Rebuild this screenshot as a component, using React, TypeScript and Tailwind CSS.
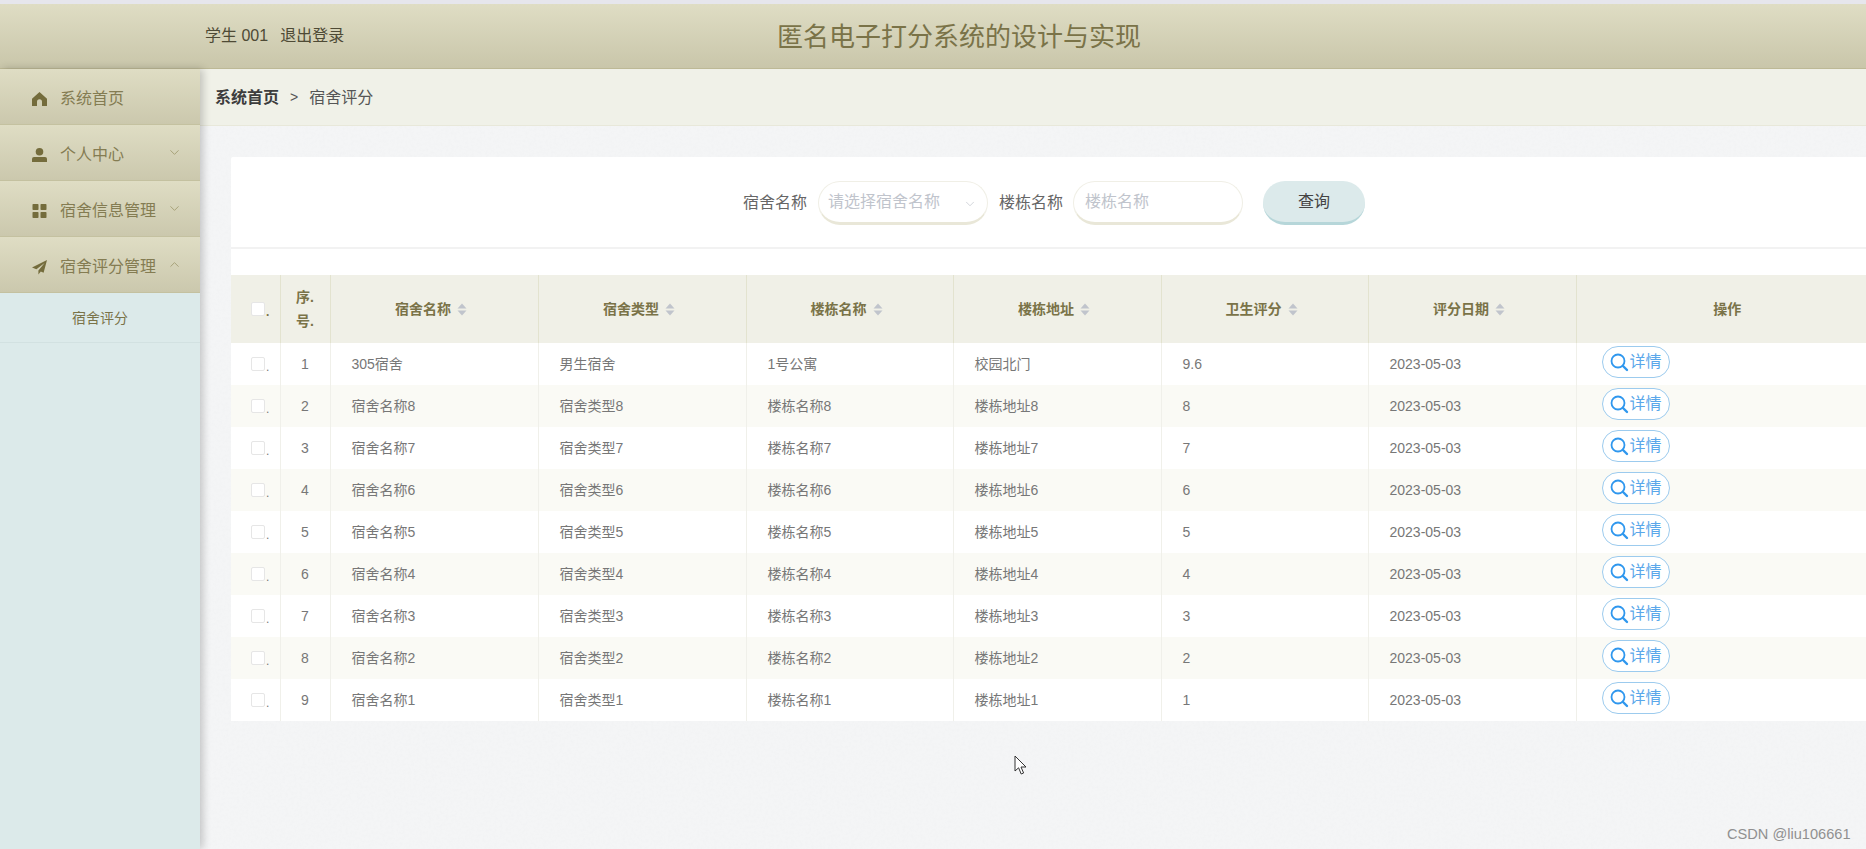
import { ChevronDown, ChevronUp } from 'lucide-react';
import type { ReactNode } from 'react';

const font = "font-['Liberation_Sans','Noto_Sans_CJK_SC',sans-serif]";

const rows = [
  { id: 1, name: '305宿舍', type: '男生宿舍', building: '1号公寓', address: '校园北门', score: '9.6' },
  { id: 2, name: '宿舍名称8', type: '宿舍类型8', building: '楼栋名称8', address: '楼栋地址8', score: '8' },
  { id: 3, name: '宿舍名称7', type: '宿舍类型7', building: '楼栋名称7', address: '楼栋地址7', score: '7' },
  { id: 4, name: '宿舍名称6', type: '宿舍类型6', building: '楼栋名称6', address: '楼栋地址6', score: '6' },
  { id: 5, name: '宿舍名称5', type: '宿舍类型5', building: '楼栋名称5', address: '楼栋地址5', score: '5' },
  { id: 6, name: '宿舍名称4', type: '宿舍类型4', building: '楼栋名称4', address: '楼栋地址4', score: '4' },
  { id: 7, name: '宿舍名称3', type: '宿舍类型3', building: '楼栋名称3', address: '楼栋地址3', score: '3' },
  { id: 8, name: '宿舍名称2', type: '宿舍类型2', building: '楼栋名称2', address: '楼栋地址2', score: '2' },
  { id: 9, name: '宿舍名称1', type: '宿舍类型1', building: '楼栋名称1', address: '楼栋地址1', score: '1' },
];

// menu glyphs drawn to match the template's own icon font
const menu = [
  {
    label: '系统首页',
    icon: <path d="M7.5 0 15 6.8V14H10V9.8a2.5 2.5 0 0 0-5 0V14H0V6.8Z" />,
  },
  {
    label: '个人中心',
    arrow: 'down',
    icon: (
      <>
        <circle cx="7.5" cy="3.8" r="3.8" />
        <path d="M2 9h11a2 2 0 0 1 2 2v3H0v-3a2 2 0 0 1 2-2Z" />
      </>
    ),
  },
  {
    label: '宿舍信息管理',
    arrow: 'down',
    icon: (
      <>
        <rect x="0.5" y="0" width="6" height="6" rx="0.8" />
        <rect x="8.5" y="0" width="6" height="6" rx="0.8" />
        <rect x="0.5" y="8" width="6" height="6" rx="0.8" />
        <rect x="8.5" y="8" width="6" height="6" rx="0.8" />
      </>
    ),
  },
  {
    label: '宿舍评分管理',
    arrow: 'up',
    icon: <path d="M15 0 0 7.6l4.4 1.6L12.6 3 6.4 10.4V14.4L8.8 11.6 11.6 12.8Z" />,
  },
];

function SortIcon() {
  return (
    <svg width="10" height="13" viewBox="0 0 10 13" className="shrink-0" fill="#c0c4cc">
      <path d="M5 0.5 9.5 5.5H0.5Z" />
      <path d="M5 12.5 0.5 7.5H9.5Z" />
    </svg>
  );
}

function Check() {
  return (
    <div className="flex items-center pl-[20px]">
      <span className="block h-[14px] w-[14px] rounded-[2px] border border-[#e6e6e6] bg-white" />
      <span className="ml-[1px] mt-[6px] text-[12px] leading-none">.</span>
    </div>
  );
}

function Th({ children, sort = true }: { children: ReactNode; sort?: boolean }) {
  return (
    <th className="border-r border-[#e3e3cf] p-0 align-middle">
      <div className="flex items-center justify-center gap-[6px] pr-[6px] text-[14px] font-bold text-[#7a7348]">
        {children}
        {sort && <SortIcon />}
      </div>
    </th>
  );
}

function Td({ children }: { children: ReactNode }) {
  return <td className="border-r border-[#f0f0ea] pl-[21px] align-middle">{children}</td>;
}

export default function App() {
  return (
    <div className={`relative h-[849px] w-[1866px] overflow-hidden bg-[#f4f5f6] ${font}`}>
      <div className="h-[4px] bg-[#e6e6ec]" />
      <header className="flex h-[65px] items-center border-b border-[#bdb996] bg-gradient-to-b from-[#dfddc4] to-[#c9c6aa]">
        <div className="w-[205px] shrink-0" />
        <div className="w-[300px] text-[16px] text-[#4e4a35]">
          学生 001<span className="ml-[12px]">退出登录</span>
        </div>
        <h1 className="ml-[272px] mt-[2px] text-[26px] font-normal text-[#7a7348]">匿名电子打分系统的设计与实现</h1>
      </header>

      <div className="flex h-[780px]">
        <aside className="relative z-10 w-[200px] shrink-0 bg-[#dceaea] shadow-[3px_0_8px_rgba(0,0,0,0.2)]">
          {menu.map(item => (
            <div
              key={item.label}
              className="flex h-[56px] items-center border-b border-[#c4c1a0] bg-gradient-to-b from-[#dfddc4] to-[#cbc8ad] pl-[32px] pr-[18px] pt-[5px] text-[16px] text-[#847c52]"
            >
              <svg width="15" height="15" viewBox="0 0 15 15" fill="#746c3c" className="shrink-0">{item.icon}</svg>
              <span className="ml-[13px] w-[96px] shrink-0">{item.label}</span>
              {item.arrow === 'down' && <ChevronDown size={15} strokeWidth={1.4} className="-mt-[6px] ml-auto text-[#a09a70]" />}
              {item.arrow === 'up' && <ChevronUp size={15} strokeWidth={1.4} className="-mt-[6px] ml-auto text-[#a09a70]" />}
            </div>
          ))}
          <div className="flex h-[50px] items-center justify-center border-b border-[#d2e1e1] pt-[1px] text-[14px] text-[#7a7348]">宿舍评分</div>
        </aside>

        <main className="relative min-w-0 flex-1">
          {/* faint paper grain behind the card */}
          <svg className="absolute inset-0 h-full w-full" aria-hidden="true">
            <filter id="paper">
              <feTurbulence type="fractalNoise" baseFrequency="0.35" numOctaves="3" seed="7" />
              <feColorMatrix values="0 0 0 0 0.6  0 0 0 0 0.62  0 0 0 0 0.65  0 0 0 0.5 -0.2" />
            </filter>
            <rect width="100%" height="100%" filter="url(#paper)" opacity="0.22" />
          </svg>

          <div className="relative flex h-[57px] items-center border-b border-[#e8e8da] bg-[#f0f1e8] pl-[15px] pt-[1px] text-[16px]">
            <span className="font-bold text-[#3d3d3d]">系统首页</span>
            <span className="mx-[11px] text-[14px] text-[#555]">&gt;</span>
            <span className="text-[#555]">宿舍评分</span>
          </div>

          <div className="relative ml-[31px] mt-[31px] w-[1647px] rounded-[2px] bg-white">
            <div className="flex h-[92px] items-center justify-center border-b-2 border-[#f2f2f2] pr-[1px] pt-[2px]">
              <label className="text-[16px] text-[#666]">宿舍名称</label>
              <div className="ml-[11px] flex h-[44px] w-[170px] items-center justify-between rounded-[22px] border border-[#f0efe6] border-b-[3px] border-b-[#e9e7d8] bg-white pl-[9px] pr-[10px] text-[16px] text-[#c0c4cc]">
                请选择宿舍名称
                <ChevronDown size={14} strokeWidth={1.2} className="mt-[3px]" />
              </div>
              <label className="ml-[11px] text-[16px] text-[#666]">楼栋名称</label>
              <div className="ml-[10px] flex h-[44px] w-[170px] items-center rounded-[22px] border border-[#f0efe6] border-b-[3px] border-b-[#e9e7d8] bg-white pl-[11px] text-[16px] text-[#c0c4cc]">
                楼栋名称
              </div>
              <button className="ml-[20px] h-[44px] w-[102px] rounded-[22px] border-b-[3px] border-[#b6d6d9] bg-[#dceaeb] text-[16px] text-[#444]">
                查询
              </button>
            </div>

            <div className="h-[26px]" />

            <table className="w-[1647px] table-fixed border-collapse text-[14px] text-[#777]">
              <colgroup>
                <col className="w-[49px]" />
                <col className="w-[50px]" />
                <col className="w-[208px]" />
                <col className="w-[208px]" />
                <col className="w-[207px]" />
                <col className="w-[208px]" />
                <col className="w-[207px]" />
                <col className="w-[208px]" />
                <col />
              </colgroup>
              <thead>
                <tr className="h-[68px] bg-[#f0f0e7]">
                  <th className="border-r border-[#e3e3cf] p-0 align-middle"><div className="text-[#7a7348]"><Check /></div></th>
                  <th className="border-r border-[#e3e3cf] p-0 align-middle text-[14px] font-bold leading-[24px] text-[#7a7348]">序.<br />号.</th>
                  <Th>宿舍名称</Th>
                  <Th>宿舍类型</Th>
                  <Th>楼栋名称</Th>
                  <Th>楼栋地址</Th>
                  <Th>卫生评分</Th>
                  <Th>评分日期</Th>
                  <th className="p-0 align-middle text-[14px] font-bold text-[#7a7348]">操作</th>
                </tr>
              </thead>
              <tbody>
                {rows.map(row => (
                  <tr key={row.id} className="h-[42px] odd:bg-white even:bg-[#fafaf5]">
                    <td className="border-r border-[#f0f0ea] align-middle"><Check /></td>
                    <td className="border-r border-[#f0f0ea] text-center align-middle">{row.id}</td>
                    <Td>{row.name}</Td>
                    <Td>{row.type}</Td>
                    <Td>{row.building}</Td>
                    <Td>{row.address}</Td>
                    <Td>{row.score}</Td>
                    <Td>2023-05-03</Td>
                    <td className="pl-[25px] align-top">
                      <button className="mt-[3px] flex h-[32px] w-[68px] items-center justify-center rounded-[16px] border border-[#9ccbee] bg-white text-[16px] text-[#5aa7ea]">
                        <svg width="20" height="20" viewBox="0 0 20 20" fill="none" stroke="#2f97ee" strokeWidth="1.8" strokeLinecap="round">
                          <circle cx="9" cy="9" r="6.5" />
                          <path d="M14 14 18 18" strokeWidth="2.4" />
                        </svg>
                        详情
                      </button>
                    </td>
                  </tr>
                ))}
              </tbody>
            </table>
          </div>
        </main>
      </div>

      {/* mouse pointer caught in the screenshot */}
      <svg className="absolute left-[1014px] top-[755px]" width="13" height="21" viewBox="0 0 13 21" fill="#fff" stroke="#333" strokeWidth="1">
        <path d="M1 1v15l3.6-3.2 2.6 6.2 2.4-1-2.6-6H12Z" />
      </svg>
      <div className="absolute left-[1727px] top-[825px] text-[14.6px] leading-[18px] text-[#909090]">CSDN @liu106661</div>
    </div>
  );
}
